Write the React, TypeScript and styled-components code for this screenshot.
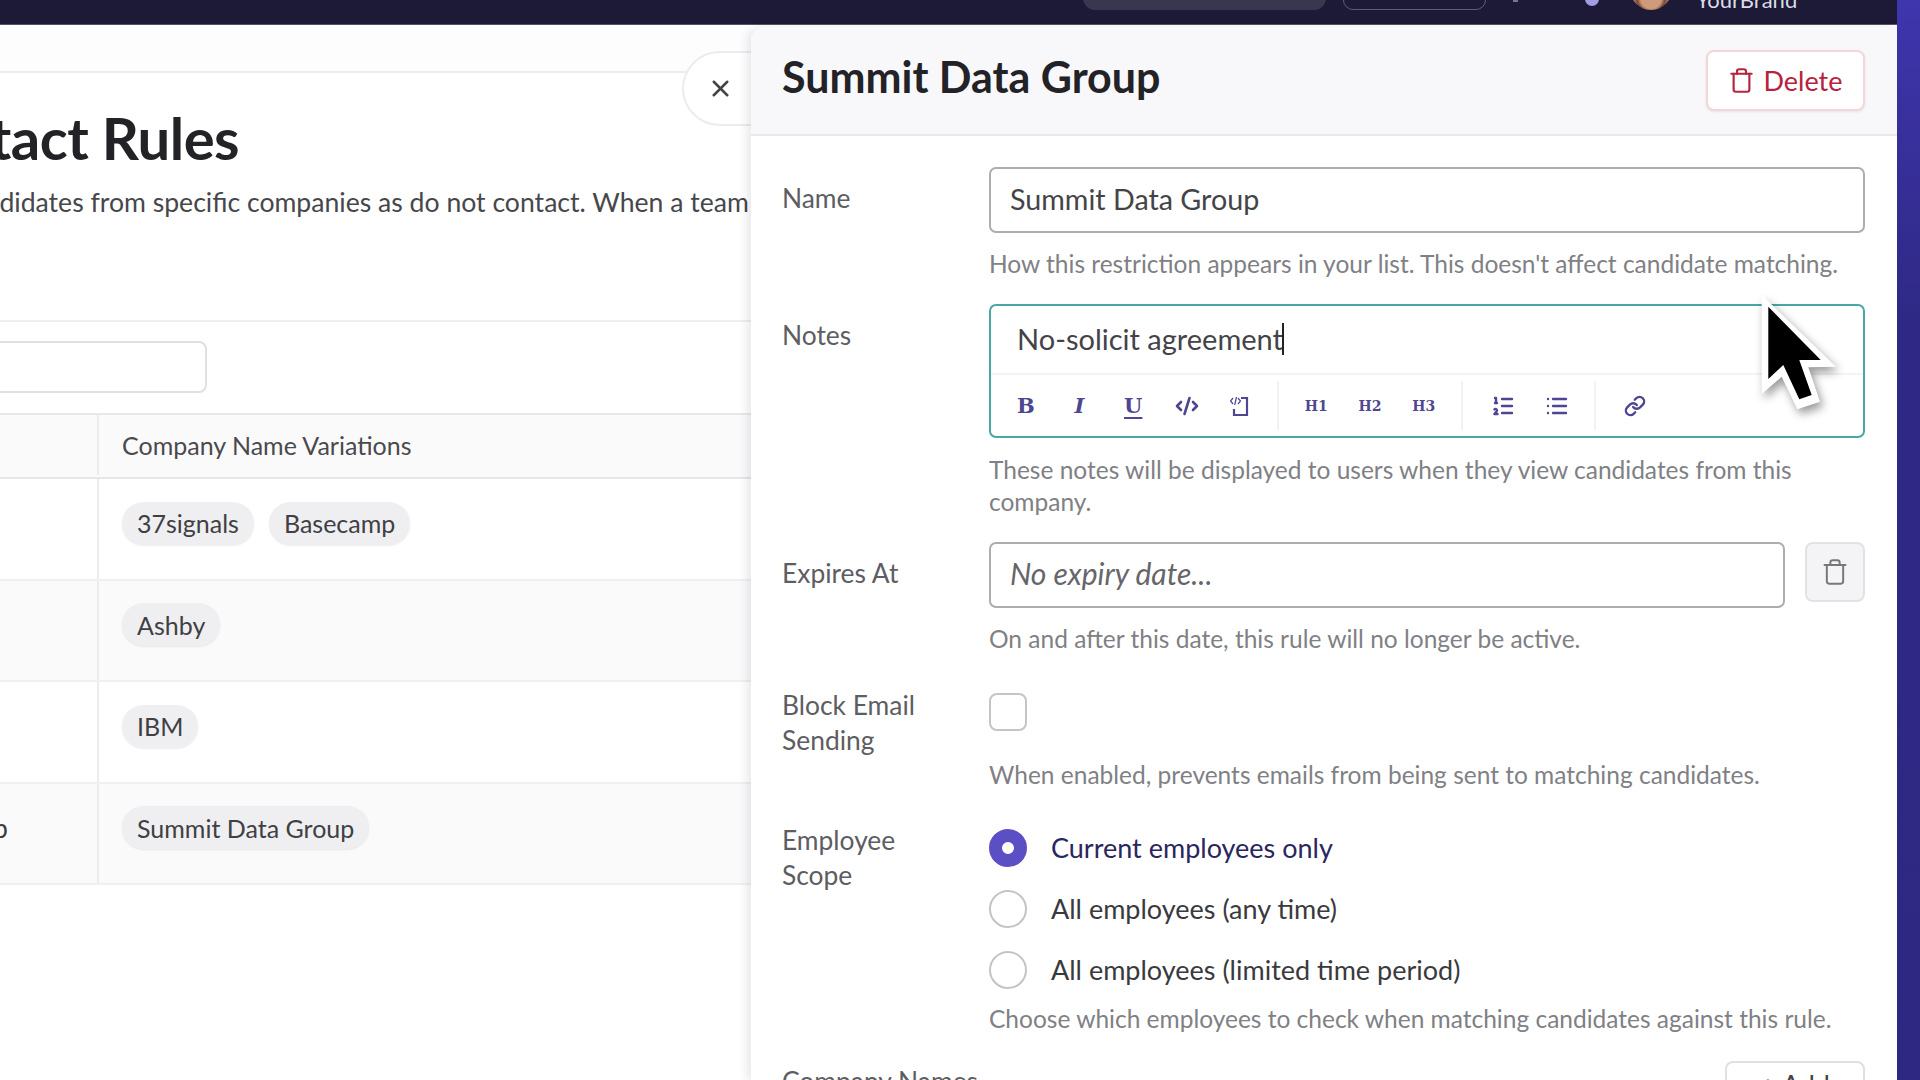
import styled, { createGlobalStyle } from "styled-components";
import { CodeXml, Link, List, ListOrdered, Trash, X } from "lucide-react";

const GlobalStyle = createGlobalStyle`
  html, body {
    margin: 0;
    padding: 0;
    height: 100%;
    overflow: hidden;
    background: #ffffff;
  }
  * {
    box-sizing: border-box;
  }
`;

const rows = [
  { name: "Basecamp", tags: ["37signals", "Basecamp"], alt: false },
  { name: "Ashby", tags: ["Ashby"], alt: true },
  { name: "IBM", tags: ["IBM"], alt: false },
  { name: "Summit Data Group", tags: ["Summit Data Group"], alt: true },
];

const scopes = [
  { label: "Current employees only", checked: true },
  { label: "All employees (any time)", checked: false },
  { label: "All employees (limited time period)", checked: false },
];

const CodeBlockIcon = () => (
  <svg width="22" height="22" viewBox="0 0 22 22" fill="none" stroke="#4e4690" strokeWidth="2.2">
    <path d="M11 3h6v17H4v-6" />
    <path d="M3 3L.5 6 3 9M8 3l2.5 3L8 9" strokeWidth="1.2" />
    <path d="M6.5 2L4.7 10" strokeWidth="1.2" />
  </svg>
);

const Cursor = () => (
  <CursorArt viewBox="55 10 90 130" width="90" height="130">
    <polygon points="61.7,15 136,86.7 108.3,87.3 120,121.7 97.3,129.3 81.7,96.7 61.7,114" fill="#ffffff" />
    <polygon points="68.3,26.7 120.7,80 99.3,80 111.7,115 99.3,119.3 83.3,85 68.3,99" fill="#000000" />
  </CursorArt>
);

export default function App() {
  return (
    <Page>
      <GlobalStyle />
      <Workspace>
        <TopBar>
          <SearchPill />
          <OutlineButton />
          <Tick />
          <StatusDot />
          <Avatar />
          <BrandName>YourBrand</BrandName>
        </TopBar>
        <Body>
          <Main>
            <MainInner>
              <SubHeader />
              <Intro>
                <Title>Do Not Contact Rules</Title>
                <Description>
                  Use these rules to mark candidates from specific companies as do not contact. When a team member views them
                </Description>
              </Intro>
              <SearchRow>
                <SearchBox />
              </SearchRow>
              <TableHead>
                <NameCell />
                <VariationCell>Company Name Variations</VariationCell>
              </TableHead>
              {rows.map((row) => (
                <TableRow key={row.name} $alt={row.alt}>
                  <NameCell>{row.name}</NameCell>
                  <VariationCell>
                    {row.tags.map((tag) => (
                      <Tag key={tag}>{tag}</Tag>
                    ))}
                  </VariationCell>
                </TableRow>
              ))}
            </MainInner>
            <CloseTab>
              <X size={27} strokeWidth={2.2} />
            </CloseTab>
          </Main>
          <Panel>
            <PanelHeader>
              <PanelTitle>Summit Data Group</PanelTitle>
              <DeleteButton>
                <Trash size={27} strokeWidth={1.9} />
                Delete
              </DeleteButton>
            </PanelHeader>
            <PanelBody>
              <Field $top={31}>
                <Label>Name</Label>
                <div>
                  <TextBox>Summit Data Group</TextBox>
                  <Hint $top={15}>How this restriction appears in your list. This doesn't affect candidate matching.</Hint>
                </div>
              </Field>
              <Field $top={24}>
                <Label>Notes</Label>
                <div>
                  <Editor>
                    <EditorText>
                      No-solicit agreement
                      <Caret />
                    </EditorText>
                    <Toolbar>
                      <ToolGroup>
                        <ToolText>B</ToolText>
                        <ToolText $italic>I</ToolText>
                        <ToolText $underline>U</ToolText>
                        <Tool>
                          <CodeXml size={24} strokeWidth={2.6} />
                        </Tool>
                        <Tool>
                          <CodeBlockIcon />
                        </Tool>
                      </ToolGroup>
                      <ToolGroup>
                        <ToolText $small>H1</ToolText>
                        <ToolText $small>H2</ToolText>
                        <ToolText $small>H3</ToolText>
                      </ToolGroup>
                      <ToolGroup $lead={4}>
                        <Tool>
                          <ListOrdered size={24} strokeWidth={2.4} />
                        </Tool>
                        <Tool>
                          <List size={24} strokeWidth={2.4} />
                        </Tool>
                      </ToolGroup>
                      <ToolGroup $last $lead={2}>
                        <Tool>
                          <Link size={22} strokeWidth={2.6} />
                        </Tool>
                      </ToolGroup>
                    </Toolbar>
                  </Editor>
                  <Hint $top={16}>These notes will be displayed to users when they view candidates from this company.</Hint>
                </div>
              </Field>
              <Field $top={24}>
                <Label>Expires At</Label>
                <div>
                  <ExpiryRow>
                    <TextBox $placeholder>No expiry date...</TextBox>
                    <ClearButton>
                      <Trash size={28} strokeWidth={1.7} />
                    </ClearButton>
                  </ExpiryRow>
                  <Hint $top={15}>On and after this date, this rule will no longer be active.</Hint>
                </div>
              </Field>
              <Field $top={33}>
                <Label $flush>Block Email Sending</Label>
                <div>
                  <Checkbox />
                  <Hint $top={28}>When enabled, prevents emails from being sent to matching candidates.</Hint>
                </div>
              </Field>
              <Field $top={32}>
                <Label $flush>Employee Scope</Label>
                <div>
                  <RadioList>
                    {scopes.map((scope) => (
                      <RadioRow key={scope.label}>
                        <Radio $checked={scope.checked} />
                        <RadioLabel $checked={scope.checked}>{scope.label}</RadioLabel>
                      </RadioRow>
                    ))}
                  </RadioList>
                  <Hint $top={14}>Choose which employees to check when matching candidates against this rule.</Hint>
                </div>
              </Field>
              <Field $top={26}>
                <NoWrapLabel $top={3}>Company Names</NoWrapLabel>
                <AddRow>
                  <AddButton>+ Add</AddButton>
                </AddRow>
              </Field>
            </PanelBody>
          </Panel>
        </Body>
      </Workspace>
      <Strip />
      <Cursor />
    </Page>
  );
}

const Page = styled.div`
  position: relative;
  display: flex;
  width: 1920px;
  height: 1080px;
  overflow: hidden;
  font-family: "Lato", "Noto Sans", sans-serif;
  color: #333336;
`;

const Workspace = styled.div`
  flex: 1;
  min-width: 0;
  display: flex;
  flex-direction: column;
`;

const Strip = styled.div`
  flex: 0 0 23px;
  background: linear-gradient(180deg, #3f35ad 0%, #2f2985 30%, #2f2883 100%);
`;

const TopBar = styled.header`
  flex: 0 0 25px;
  min-height: 0;
  overflow: hidden;
  display: flex;
  align-items: flex-end;
  padding: 0 99px 14px 1083px;
  background: #1c1a36;
  border-bottom: 1px solid #55536a;
`;

const SearchPill = styled.div`
  flex: 0 0 243px;
  height: 40px;
  background: #393750;
  border-radius: 12px;
`;

const OutlineButton = styled.div`
  flex: 0 0 143px;
  height: 40px;
  margin-left: 17px;
  border: 1.5px solid #5f5d75;
  border-radius: 10px;
`;

const Tick = styled.div`
  flex: 0 0 5px;
  height: 2px;
  margin-left: 27px;
  margin-bottom: 8px;
  background: #77758a;
`;

const StatusDot = styled.div`
  flex: 0 0 14px;
  height: 14px;
  margin-left: 67px;
  margin-bottom: 4px;
  background: #a19de0;
  border-radius: 50%;
`;

const Avatar = styled.div`
  flex: 0 0 42px;
  height: 42px;
  margin-left: 31px;
  border-radius: 50%;
  background: radial-gradient(circle at 50% 72%, #d09a7c 0 28%, #7a4a30 38%, #d9cfc6 62%);
`;

const BrandName = styled.div`
  margin-left: 24px;
  margin-bottom: -1px;
  font-size: 22px;
  line-height: 22px;
  color: #dcdce4;
  white-space: nowrap;
`;

const Body = styled.div`
  flex: 1;
  min-height: 0;
  display: flex;
`;

const Main = styled.main`
  position: relative;
  flex: 0 0 751px;
  overflow: hidden;
`;

const MainInner = styled.div`
  width: 1400px;
  margin-left: -480px;
`;

const SubHeader = styled.div`
  height: 48px;
  background: #fdfdfe;
  border-bottom: 2px solid #ececee;
`;

const Intro = styled.section`
  height: 249px;
  padding: 32px 0 0 168px;
  border-bottom: 2px solid #efeff1;
`;

const Title = styled.h1`
  margin: 0;
  font-size: 58px;
  line-height: 66px;
  font-weight: 700;
  letter-spacing: -0.5px;
  color: #232327;
  white-space: nowrap;
`;

const Description = styled.p`
  margin: 14px 0 0 -11px;
  font-size: 26.6px;
  line-height: 34px;
  color: #47474b;
  white-space: nowrap;
`;

const SearchRow = styled.div`
  height: 91px;
  padding-top: 19px;
`;

const SearchBox = styled.div`
  width: 687px;
  height: 52px;
  border: 2px solid #e0e0e2;
  border-radius: 8px;
  background: #ffffff;
`;

const TableHead = styled.div`
  display: grid;
  grid-template-columns: 579px 1fr;
  height: 66px;
  padding-bottom: 2px;
  background: #fafafb;
  border-top: 2px solid #e8e8ea;
  border-bottom: 2px solid #e6e6e8;
  font-size: 25px;
  color: #4a4a4e;
`;

const TableRow = styled.div<{ $alt: boolean }>`
  display: grid;
  grid-template-columns: 579px 1fr;
  height: 101.5px;
  background: ${({ $alt }) => ($alt ? "#fafafb" : "#ffffff")};
  border-bottom: 2px solid #f0f0f2;
  font-size: 26px;
  color: #3c3c40;
`;

const NameCell = styled.div`
  display: flex;
  align-items: center;
  padding: 0 0 10px 262px;
  border-right: 2px solid #ececee;
  white-space: nowrap;
`;

const VariationCell = styled.div`
  display: flex;
  align-items: center;
  gap: 15px;
  padding-left: 23px;
`;

const Tag = styled.span`
  display: inline-flex;
  align-items: center;
  height: 43px;
  margin-bottom: 11px;
  padding: 0 15px;
  background: #efeff1;
  border-radius: 22px;
  box-shadow: 0 1px 2px rgba(0, 0, 0, 0.08);
  font-size: 25px;
  color: #404044;
  white-space: nowrap;
`;

const CloseTab = styled.button`
  position: absolute;
  top: 26px;
  right: 0;
  display: flex;
  align-items: center;
  justify-content: center;
  width: 69px;
  height: 75px;
  padding: 0 0 0 5px;
  background: #ffffff;
  border: 2px solid #ececee;
  border-right: 0;
  border-radius: 38px 0 0 38px;
  color: #444448;
`;

const Panel = styled.aside`
  flex: 1;
  min-width: 0;
  display: flex;
  flex-direction: column;
  background: #ffffff;
  border-top-left-radius: 14px;
  box-shadow: -4px 0 10px rgba(30, 30, 60, 0.1);
  z-index: 1;
  margin-top: 2px;
`;

const PanelHeader = styled.div`
  flex: 0 0 109px;
  display: flex;
  align-items: center;
  justify-content: space-between;
  padding: 0 32px 5px 31px;
  background: #f8f8fa;
  border-top-left-radius: 14px;
  border-bottom: 2px solid #e9e9eb;
`;

const PanelTitle = styled.h2`
  margin: 0 0 3px;
  font-size: 43px;
  line-height: 52px;
  font-weight: 700;
  color: #232327;
`;

const DeleteButton = styled.button`
  display: flex;
  align-items: center;
  justify-content: center;
  gap: 8px;
  width: 159px;
  height: 61px;
  margin-top: 4px;
  background: #ffffff;
  border: 2px solid #f3d6dc;
  border-radius: 8px;
  box-shadow: 0 1px 3px rgba(0, 0, 0, 0.08);
  font-family: inherit;
  font-size: 27px;
  color: #b5233f;
`;

const PanelBody = styled.div`
  padding: 0 32px 0 31px;
`;

const Field = styled.div<{ $top: number }>`
  display: grid;
  grid-template-columns: 207px 1fr;
  margin-top: ${({ $top }) => $top}px;
`;

const Label = styled.label<{ $flush?: boolean; $top?: number }>`
  display: block;
  padding-top: ${({ $flush, $top }) => ($flush ? 0 : $top ?? 14)}px;
  padding-right: 40px;
  font-size: 26.4px;
  line-height: 35px;
  color: #5d5d62;
`;

const NoWrapLabel = styled(Label)`
  padding-right: 0;
  white-space: nowrap;
`;

const TextBox = styled.div<{ $placeholder?: boolean }>`
  flex: 1;
  display: flex;
  align-items: center;
  height: 66px;
  padding: 0 19px ${({ $placeholder }) => ($placeholder ? 4 : 2)}px;
  border: 2px solid #adadb0;
  border-radius: 7px;
  background: #ffffff;
  font-size: ${({ $placeholder }) => ($placeholder ? 30 : 28.7)}px;
  font-style: ${({ $placeholder }) => ($placeholder ? "italic" : "normal")};
  color: ${({ $placeholder }) => ($placeholder ? "#66666a" : "#444448")};
`;

const Hint = styled.p<{ $top: number }>`
  margin: ${({ $top }) => $top}px 0 0;
  font-size: 24.5px;
  line-height: 32px;
  color: #808085;
`;

const Editor = styled.div`
  height: 134px;
  border: 2px solid #4aa7a7;
  border-radius: 7px;
  background: #ffffff;
`;

const EditorText = styled.div`
  display: flex;
  align-items: center;
  height: 69px;
  padding: 0 0 2px 26px;
  border-bottom: 2px solid #f4f4f6;
  font-size: 29px;
  color: #444448;
`;

const Caret = styled.span`
  width: 2px;
  height: 32px;
  margin-left: -1px;
  background: #222226;
`;

const Toolbar = styled.div`
  display: flex;
  align-items: center;
  height: 61px;
  padding-left: 8px;
`;

const ToolGroup = styled.div<{ $last?: boolean; $lead?: number }>`
  display: flex;
  height: 49px;
  padding-left: ${({ $lead }) => $lead ?? 0}px;
  padding-right: 10px;
  margin-right: 10px;
  border-right: ${({ $last }) => ($last ? "0" : "2px solid #f2f2f4")};
`;

const Tool = styled.span`
  display: flex;
  align-items: center;
  justify-content: center;
  width: 53.7px;
  color: #4e4690;
`;

const ToolText = styled(Tool)<{ $italic?: boolean; $underline?: boolean; $small?: boolean }>`
  font-family: "DejaVu Serif", serif;
  font-weight: 700;
  font-size: ${({ $small }) => ($small ? 14 : 21)}px;
  font-style: ${({ $italic }) => ($italic ? "italic" : "normal")};
  text-decoration: ${({ $underline }) => ($underline ? "underline" : "none")};
  text-decoration-thickness: 2px;
  text-underline-offset: 4px;
`;

const ExpiryRow = styled.div`
  display: flex;
  align-items: flex-start;
  gap: 20px;
`;

const ClearButton = styled.button`
  flex: 0 0 60px;
  display: flex;
  align-items: center;
  justify-content: center;
  height: 60px;
  padding: 0;
  background: #f4f4f6;
  border: 2px solid #e2e2e4;
  border-radius: 8px;
  color: #77777c;
`;

const Checkbox = styled.div`
  width: 38px;
  height: 38px;
  margin-top: 5px;
  border: 2px solid #c4c4c7;
  border-radius: 8px;
  background: #ffffff;
`;

const RadioList = styled.div`
  display: flex;
  flex-direction: column;
  gap: 23px;
  margin-top: 6px;
`;

const RadioRow = styled.div`
  display: flex;
  align-items: center;
  gap: 24px;
`;

const Radio = styled.div<{ $checked: boolean }>`
  flex: 0 0 38px;
  height: 38px;
  border-radius: 50%;
  background: #ffffff;
  border: ${({ $checked }) => ($checked ? "13px solid #5a50c4" : "2px solid #c4c4c7")};
`;

const RadioLabel = styled.span<{ $checked: boolean }>`
  font-size: 27px;
  line-height: 38px;
  color: ${({ $checked }) => ($checked ? "#2a2660" : "#3a3a3e")};
`;

const AddRow = styled.div`
  display: flex;
  justify-content: flex-end;
`;

const AddButton = styled.button`
  width: 140px;
  height: 46px;
  padding: 0;
  background: #ffffff;
  border: 2px solid #e0e0e2;
  border-radius: 8px;
  font-family: inherit;
  font-size: 27px;
  color: #444448;
`;

const CursorArt = styled.svg`
  position: absolute;
  z-index: 2;
  left: 1755px;
  top: 290px;
  filter: drop-shadow(3px 5px 5px rgba(0, 0, 0, 0.4));
`;
